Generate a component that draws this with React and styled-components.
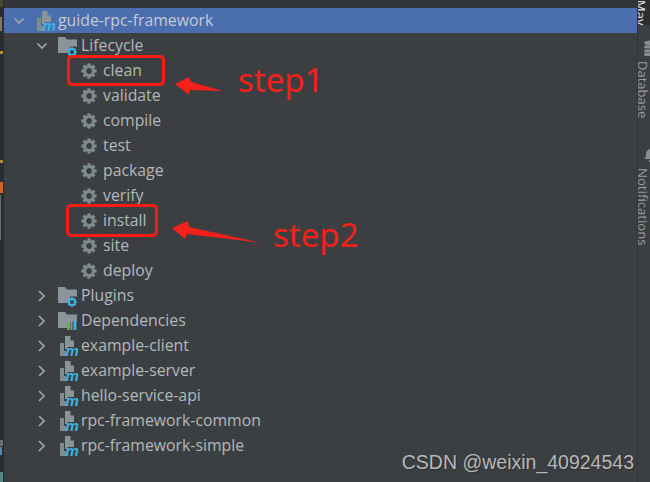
import React from 'react';
import styled, { createGlobalStyle } from 'styled-components';

const GlobalStyle = createGlobalStyle`
  html, body {
    margin: 0;
    padding: 0;
    background: #3c3f41;
  }
`;

const Page = styled.div`
  position: relative;
  width: 650px;
  height: 482px;
  overflow: hidden;
  display: flex;
  background: #3c3f41;
  font-family: "Open Sans", "Noto Sans", sans-serif;
`;

const LeftEdge = styled.div`
  position: relative;
  width: 4px;
  flex: none;
  background: #2b2c2d;
`;

const EdgeMark = styled.i`
  position: absolute;
  left: 0;
  top: ${props => props.$top}px;
  width: ${props => props.$width || 3}px;
  height: ${props => props.$height}px;
  background: ${props => props.$color};
`;

const Main = styled.div`
  flex: 1;
  display: flex;
  flex-direction: column;
  min-width: 0;
`;

const TopEdge = styled.div`
  height: 8px;
  flex: none;
  background: #32353a;
`;

const Tree = styled.div`
  display: flex;
  flex-direction: column;
`;

const Row = styled.div`
  height: 25px;
  display: flex;
  align-items: center;
  padding-left: ${props => 6 + props.$level * 23}px;
  background: ${props => (props.$selected ? '#4b6eaf' : 'transparent')};
  color: ${props => (props.$selected ? '#c4c9d2' : '#b4b8ba')};
  font-size: 15.8px;
  white-space: nowrap;
`;

const ChevronSlot = styled.span`
  width: 25px;
  flex: none;
  display: flex;
  padding-left: 3px;
  box-sizing: border-box;
`;

const IconSlot = styled.span`
  width: ${props => (props.$leaf ? 22 : 23)}px;
  flex: none;
  display: flex;
  align-items: center;
`;

const Label = styled.span`
  margin-top: -2px;
`;

const Rail = styled.div`
  width: 13px;
  flex: none;
  border-left: 1px solid #323436;
  box-sizing: border-box;
  display: flex;
  flex-direction: column;
  overflow: hidden;
`;

const RailTab = styled.div`
  height: 25px;
  flex: none;
  background: #2b2d2f;
  color: #e4e4e4;
  font-size: 13px;
  padding-left: 5px;
  writing-mode: vertical-rl;
  margin-bottom: 15px;
  overflow: hidden;
`;

const RailItem = styled.div`
  display: flex;
  flex-direction: column;
  padding-left: 6px;
  color: #9a9da0;
  margin-bottom: ${props => props.$gap}px;
`;

const RailLabel = styled.span`
  writing-mode: vertical-rl;
  font-size: ${props => props.$size}px;
  line-height: 14px;
  margin-top: ${props => props.$top}px;
  white-space: nowrap;
`;

const RedBox = styled.div`
  position: absolute;
  left: ${props => props.$x}px;
  top: ${props => props.$y}px;
  width: ${props => props.$w}px;
  height: ${props => props.$h}px;
  box-sizing: border-box;
  border: 3px solid #fb1b14;
  border-radius: 5px;
`;

const StepLabel = styled.div`
  position: absolute;
  left: ${props => props.$x}px;
  top: ${props => props.$y}px;
  color: #f5201a;
  font-family: "Noto Sans", sans-serif;
  font-size: 33px;
  line-height: 40px;
`;

const ArrowLayer = styled.svg`
  position: absolute;
  left: 0;
  top: 0;
  pointer-events: none;
`;

const Watermark = styled.div`
  position: absolute;
  right: 16px;
  top: 452px;
  color: #b6b8b9;
  font-family: "Liberation Sans", sans-serif;
  font-size: 19.5px;
  line-height: 20px;
  text-shadow: 1px 1px 1px #2c2e30;
  white-space: nowrap;
`;

const OverflowSvg = styled.svg`
  overflow: visible;
  flex: none;
`;

const Chevron = ({ open }) => (
  <svg width="12" height="12" viewBox="0 0 12 12" fill="none" stroke="#a3a7aa" strokeWidth="1.6">
    <path d={open ? 'M1.5 3.5 6 8 10.5 3.5' : 'M3 1 8 6 3 11'} />
  </svg>
);

const teeth = [0, 45, 90, 135, 180, 225, 270, 315];

const Gear = () => (
  <svg width="16" height="16" viewBox="0 0 16 16">
    <circle cx="8" cy="8" r="4.4" fill="none" stroke="#7f8b91" strokeWidth="3" />
    {teeth.map(a => (
      <rect key={a} x="6.4" y="0.4" width="3.2" height="3" fill="#7f8b91" transform={`rotate(${a} 8 8)`} />
    ))}
  </svg>
);

const BlueGear = () => (
  <g>
    <circle cx="14" cy="15" r="3" fill="none" stroke="#3eb2e4" strokeWidth="2" />
    {teeth.map(a => (
      <rect key={a} x="13" y="10.2" width="2" height="2" fill="#3eb2e4" transform={`rotate(${a} 14 15)`} />
    ))}
  </g>
);

const ModuleIcon = () => (
  <OverflowSvg width="22" height="22" viewBox="-2 -3 22 22">
    <path d="M5 -2h5.5v4.5H14V9H7.5v2H5z" fill="#8a959b" />
    <path d="M0 5h4v8h2v5H0z" fill="#7f8b91" />
    <text x="5.5" y="18" fontFamily="'Liberation Sans', sans-serif" fontSize="15" fontStyle="italic" fontWeight="700" fill="#3eb2e4">m</text>
  </OverflowSvg>
);

const FolderShape = () => <path d="M0 0h7l2 2.5h10v7h-7v6.5H0z" fill="#8a959b" />;

const PhaseFolder = () => (
  <svg width="19" height="22" viewBox="0 -2 19 22">
    <FolderShape />
    <BlueGear />
  </svg>
);

const DepsFolder = () => (
  <svg width="19" height="22" viewBox="0 -2 19 22">
    <FolderShape />
    <rect x="9" y="11" width="2.5" height="7" fill="#62b543" />
    <rect x="12.5" y="8" width="2" height="10" fill="#8a959b" />
    <rect x="15.5" y="9" width="3" height="9" fill="#3eb2e4" />
  </svg>
);

const nodes = [
  { level: 0, open: true, icon: ModuleIcon, label: 'guide-rpc-framework', selected: true },
  { level: 1, open: true, icon: PhaseFolder, label: 'Lifecycle' },
  { level: 2, icon: Gear, label: 'clean' },
  { level: 2, icon: Gear, label: 'validate' },
  { level: 2, icon: Gear, label: 'compile' },
  { level: 2, icon: Gear, label: 'test' },
  { level: 2, icon: Gear, label: 'package' },
  { level: 2, icon: Gear, label: 'verify' },
  { level: 2, icon: Gear, label: 'install' },
  { level: 2, icon: Gear, label: 'site' },
  { level: 2, icon: Gear, label: 'deploy' },
  { level: 1, open: false, icon: PhaseFolder, label: 'Plugins' },
  { level: 1, open: false, icon: DepsFolder, label: 'Dependencies' },
  { level: 1, open: false, icon: ModuleIcon, label: 'example-client' },
  { level: 1, open: false, icon: ModuleIcon, label: 'example-server' },
  { level: 1, open: false, icon: ModuleIcon, label: 'hello-service-api' },
  { level: 1, open: false, icon: ModuleIcon, label: 'rpc-framework-common' },
  { level: 1, open: false, icon: ModuleIcon, label: 'rpc-framework-simple' },
];

const App = () => (
  <Page>
    <GlobalStyle />
    <LeftEdge>
      <EdgeMark $top={0} $height={7} $color="#4a4a32" />
      <EdgeMark $top={17} $height={14} $width={2} $color="#7f7a62" />
      <EdgeMark $top={51} $height={3} $color="#b8901f" />
      <EdgeMark $top={160} $height={3} $color="#b8901f" />
      <EdgeMark $top={182} $height={11} $color="#c8662c" />
      <EdgeMark $top={195} $height={45} $width={1} $color="#6b6e70" />
      <EdgeMark $top={440} $height={6} $color="#6b6e70" />
      <EdgeMark $top={447} $height={8} $width={2} $color="#5b86b8" />
      <EdgeMark $top={472} $height={10} $color="#4f8a86" />
    </LeftEdge>
    <Main>
      <TopEdge />
      <Tree>
        {nodes.map(({ level, open, icon: Icon, label, selected }) => (
          <Row key={label} $level={level} $selected={selected}>
            <ChevronSlot>{open !== undefined && <Chevron open={open} />}</ChevronSlot>
            <IconSlot $leaf={open === undefined}>
              <Icon />
            </IconSlot>
            <Label>{label}</Label>
          </Row>
        ))}
      </Tree>
    </Main>
    <Rail>
      <RailTab>Maven</RailTab>
      <RailItem $gap={30}>
        <svg width="14" height="16" viewBox="0 0 14 16" fill="#8b8e91">
          <ellipse cx="7" cy="3" rx="7" ry="2.5" />
          <rect y="5.5" width="14" height="3" rx="1.5" />
          <rect y="9.5" width="14" height="3" rx="1.5" />
          <rect y="13" width="14" height="3" rx="1.5" />
        </svg>
        <RailLabel $size={13} $top={5}>Database</RailLabel>
      </RailItem>
      <RailItem $gap={0}>
        <svg width="14" height="14" viewBox="0 0 14 14" fill="#8b8e91">
          <path d="M0 11c2-1 2-3 2-5a5 5 0 0 1 10 0c0 2 0 4 2 5zM5 12h4v2H5z" />
        </svg>
        <RailLabel $size={13.2} $top={6}>Notifications</RailLabel>
      </RailItem>
    </Rail>

    <RedBox $x={67} $y={55} $w={98} $h={31} />
    <RedBox $x={66} $y={204} $w={92} $h={33} />
    <ArrowLayer width="650" height="482" viewBox="0 0 650 482">
      <polygon points="175,84 189,77 191,82 223,91 190,90 189,95" fill="#f5201a" />
      <polygon points="172,228 188,221 189,227 262,243 187,234 185,239" fill="#f5201a" />
    </ArrowLayer>
    <StepLabel $x={238} $y={60}>step1</StepLabel>
    <StepLabel $x={273} $y={215}>step2</StepLabel>
    <Watermark>CSDN @weixin_40924543</Watermark>
  </Page>
);

export default App;
